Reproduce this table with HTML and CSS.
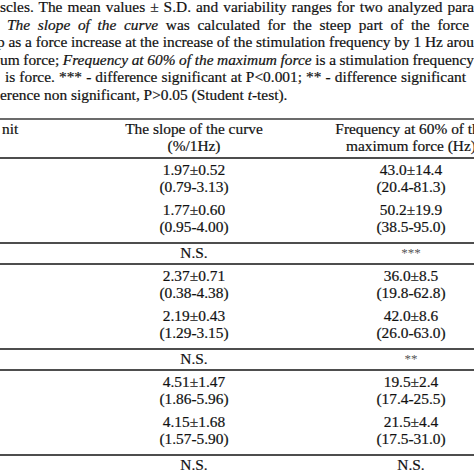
FILE: index.html
```html
<!DOCTYPE html>
<html>
<head>
<meta charset="utf-8">
<link rel="stylesheet" href="styles.css">
</head>
<body>
<div class="page">
  <div class="caption">
    <div class="ln">scles. The mean values ± S.D. and variability ranges for two analyzed para</div>
    <div class="ln ln-in6 ln-r4"><i>The slope of the curve</i> was calculated for the steep part of the force</div>
    <div class="ln ln-cut ln-tight">p as a force increase at the increase of the stimulation frequency by 1 Hz arou</div>
    <div class="ln ln-tight">um force; <i>Frequency at 60% of the maximum force</i> is a stimulation frequency</div>
    <div class="ln ln-in5 ln-r8">is force. *** - difference significant at P&lt;0.001; ** - difference significant</div>
    <div class="ln ln-last">erence non significant, P&gt;0.05 (Student <i>t</i>-test).</div>
  </div>

  <div class="table">
    <div class="row head">
      <div class="c1">nit</div>
      <div class="c2">The slope of the curve<br>(%/1Hz)</div>
      <div class="c3">Frequency at 60% of the<br>maximum force (Hz)</div>
    </div>

    <div class="group">
      <div class="row sub"><div class="c1"></div><div class="c2">1.97±0.52<br>(0.79-3.13)</div><div class="c3">43.0±14.4<br>(20.4-81.3)</div></div>
      <div class="row sub"><div class="c1"></div><div class="c2">1.77±0.60<br>(0.95-4.00)</div><div class="c3">50.2±19.9<br>(38.5-95.0)</div></div>
    </div>
    <div class="row ns"><div class="c1"></div><div class="c2">N.S.</div><div class="c3 stars">***</div></div>

    <div class="group">
      <div class="row sub"><div class="c1"></div><div class="c2">2.37±0.71<br>(0.38-4.38)</div><div class="c3">36.0±8.5<br>(19.8-62.8)</div></div>
      <div class="row sub"><div class="c1"></div><div class="c2">2.19±0.43<br>(1.29-3.15)</div><div class="c3">42.0±8.6<br>(26.0-63.0)</div></div>
    </div>
    <div class="row ns"><div class="c1"></div><div class="c2">N.S.</div><div class="c3 stars">**</div></div>

    <div class="group">
      <div class="row sub"><div class="c1"></div><div class="c2">4.51±1.47<br>(1.86-5.96)</div><div class="c3">19.5±2.4<br>(17.4-25.5)</div></div>
      <div class="row sub"><div class="c1"></div><div class="c2">4.15±1.68<br>(1.57-5.90)</div><div class="c3">21.5±4.4<br>(17.5-31.0)</div></div>
    </div>
    <div class="row ns"><div class="c1"></div><div class="c2">N.S.</div><div class="c3">N.S.</div></div>
  </div>
</div>
</body>
</html>
```

FILE: styles.css
```css
html, body {
  margin: 0;
  padding: 0;
  background: #ffffff;
  overflow: hidden;
}

.page {
  width: 474px;
  height: 474px;
  overflow: hidden;
  font-family: "Liberation Serif", "Times New Roman", serif;
  font-size: 15.4px;
  color: #111111;
  -webkit-text-stroke: 0.2px #111111;
}

.caption {
  margin-top: -2px;
  line-height: 17.6px;
}

.ln {
  white-space: nowrap;
  text-align: justify;
  text-align-last: justify;
  height: 17.6px;
}

.ln-in5 { padding-left: 5px; }
.ln-in6 { padding-left: 7px; }
.ln-r4 { padding-right: 5px; }
.ln-r8 { padding-right: 8px; }
.ln-cut { text-indent: -3px; }
.ln-tight { word-spacing: -1px; }
.ln-last {
  text-align: left;
  text-align-last: left;
}

.table {
  width: 534px;
  margin-top: 14px;
  line-height: 17px;
}

.row {
  display: grid;
  grid-template-columns: 100px 188px 246px;
}

.c1 {
  text-align: left;
  padding-left: 2px;
}

.c2, .c3 {
  text-align: center;
  white-space: nowrap;
}

.head {
  border-top: 2px solid #6b6b6b;
  padding-bottom: 3px;
}

.group {
  border-top: 2px solid #4e4e4e;
  padding-bottom: 3px;
}

.sub {
  padding: 2px 0 4px;
}

.ns {
  border-top: 2px solid #4e4e4e;
  padding-bottom: 2px;
}

.stars {
  color: #555;
  -webkit-text-stroke: 0;
  font-size: 13px;
}
```
